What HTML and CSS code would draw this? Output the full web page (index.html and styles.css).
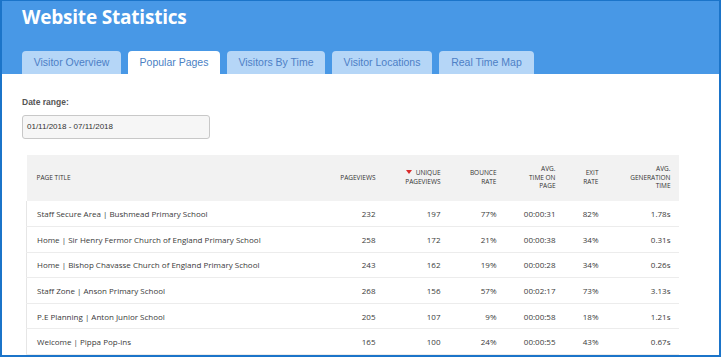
FILE: index.html
```html
<!DOCTYPE html>
<html>
<head>
<meta charset="utf-8">
<link rel="stylesheet" href="styles.css">
</head>
<body>
<div class="frame">
  <header class="top">
    <h1 class="title">Website Statistics</h1>
    <nav class="tabs">
      <div class="tab">Visitor Overview</div>
      <div class="tab active">Popular Pages</div>
      <div class="tab">Visitors By Time</div>
      <div class="tab">Visitor Locations</div>
      <div class="tab">Real Time Map</div>
    </nav>
  </header>
  <main class="content">
    <label class="lbl">Date range:</label>
    <div class="input">01/11/2018 - 07/11/2018</div>
    <table class="stats">
      <colgroup>
        <col class="c1"><col class="c2"><col class="c3"><col class="c4"><col class="c5"><col class="c6"><col class="c7">
      </colgroup>
      <thead>
        <tr>
          <th class="left">Page Title</th>
          <th>Pageviews</th>
          <th><span class="tri"></span> Unique<br>Pageviews</th>
          <th>Bounce<br>Rate</th>
          <th>Avg.<br>Time on<br>Page</th>
          <th>Exit<br>Rate</th>
          <th>Avg.<br>Generation<br>Time</th>
        </tr>
      </thead>
      <tbody>
        <tr><td class="left">Staff Secure Area | Bushmead Primary School</td><td>232</td><td>197</td><td>77%</td><td>00:00:31</td><td>82%</td><td>1.78s</td></tr>
        <tr><td class="left">Home | Sir Henry Fermor Church of England Primary School</td><td>258</td><td>172</td><td>21%</td><td>00:00:38</td><td>34%</td><td>0.31s</td></tr>
        <tr><td class="left">Home | Bishop Chavasse Church of England Primary School</td><td>243</td><td>162</td><td>19%</td><td>00:00:28</td><td>34%</td><td>0.26s</td></tr>
        <tr><td class="left">Staff Zone | Anson Primary School</td><td>268</td><td>156</td><td>57%</td><td>00:02:17</td><td>73%</td><td>3.13s</td></tr>
        <tr><td class="left">P.E Planning | Anton Junior School</td><td>205</td><td>107</td><td>9%</td><td>00:00:58</td><td>18%</td><td>1.21s</td></tr>
        <tr><td class="left">Welcome | Pippa Pop-ins</td><td>165</td><td>100</td><td>24%</td><td>00:00:55</td><td>43%</td><td>0.67s</td></tr>
      </tbody>
    </table>
  </main>
</div>
</body>
</html>
```

FILE: styles.css
```css
* { box-sizing: border-box; }
html, body { margin: 0; padding: 0; }
body { width: 721px; height: 357px; overflow: hidden; background: #fff; }
.frame {
  width: 721px; height: 357px; overflow: hidden;
  border: 2px solid #1b74c9; border-top-width: 1px;
  display: flex; flex-direction: column;
}
.top {
  background: #4898e6;
  padding: 3px 0 0 20px;
  height: 74px;
  display: flex; flex-direction: column;
}
.title {
  margin: 0;
  font-family: "Open Sans", sans-serif;
  font-weight: 700; font-size: 19px; line-height: 26px;
  letter-spacing: -0.2px;
  color: #fff;
}
.tabs { display: flex; gap: 7px; margin-top: auto; }
.tab {
  width: 98px; height: 23px;
  background: #b5d6f7;
  color: #4d80c6;
  font-family: "Liberation Sans", Arial, sans-serif;
  font-size: 10.5px; line-height: 23px;
  text-align: center;
  border-radius: 4px 4px 0 0;
}
.tab:nth-child(1) { width: 99px; }
.tab:nth-child(2) { width: 92px; }
.tab:nth-child(3) { width: 98px; }
.tab:nth-child(4) { width: 100px; }
.tab:nth-child(5) { width: 95px; }
.tab.active { background: #fff; color: #4a7fc4; }
.content { flex: 1; padding: 22px 0 0 20px; }
.lbl {
  display: block;
  font-family: "Liberation Sans", Arial, sans-serif;
  font-size: 8.5px; font-weight: 700; color: #555;
  line-height: 12px;
}
.input {
  margin-top: 7px;
  width: 188px; height: 24px;
  border: 1px solid #c8c8c8; border-radius: 3px;
  background: #f6f6f6;
  font-family: "Liberation Sans", Arial, sans-serif;
  font-size: 8px; color: #333;
  line-height: 22px; padding-left: 4px;
}
.stats {
  margin: 16px 0 0 4px;
  width: 652px;
  border-collapse: collapse;
  table-layout: fixed;
  font-family: "Open Sans", sans-serif;
  color: #3a3a3a;
}
.c1 { width: 300px; } .c2 { width: 57px; } .c3 { width: 65px; }
.c4 { width: 56px; } .c5 { width: 59px; } .c6 { width: 43px; } .c7 { width: 72px; }
.stats thead tr { background: #f2f2f2; height: 46px; }
.stats th {
  font-size: 6.5px; font-weight: 400; text-transform: uppercase;
  line-height: 8.7px; text-align: right; padding: 0 8px 0 0;
  vertical-align: middle; color: #333;
}
.stats th.left, .stats td.left { text-align: left; padding-left: 10px; }
.stats td {
  font-size: 8px; height: 25.6px; padding: 0 8px 0 0;
  text-align: right; vertical-align: middle;
  border-bottom: 1px solid #ececec;
  white-space: nowrap;
}
.stats tbody td:first-child { border-left: 1px solid #e6e6e6; }
.tri {
  display: inline-block; width: 0; height: 0;
  border-left: 3px solid transparent; border-right: 3px solid transparent;
  border-top: 4px solid #d92b2b;
  vertical-align: 1px; margin-right: 2px;
}
```
